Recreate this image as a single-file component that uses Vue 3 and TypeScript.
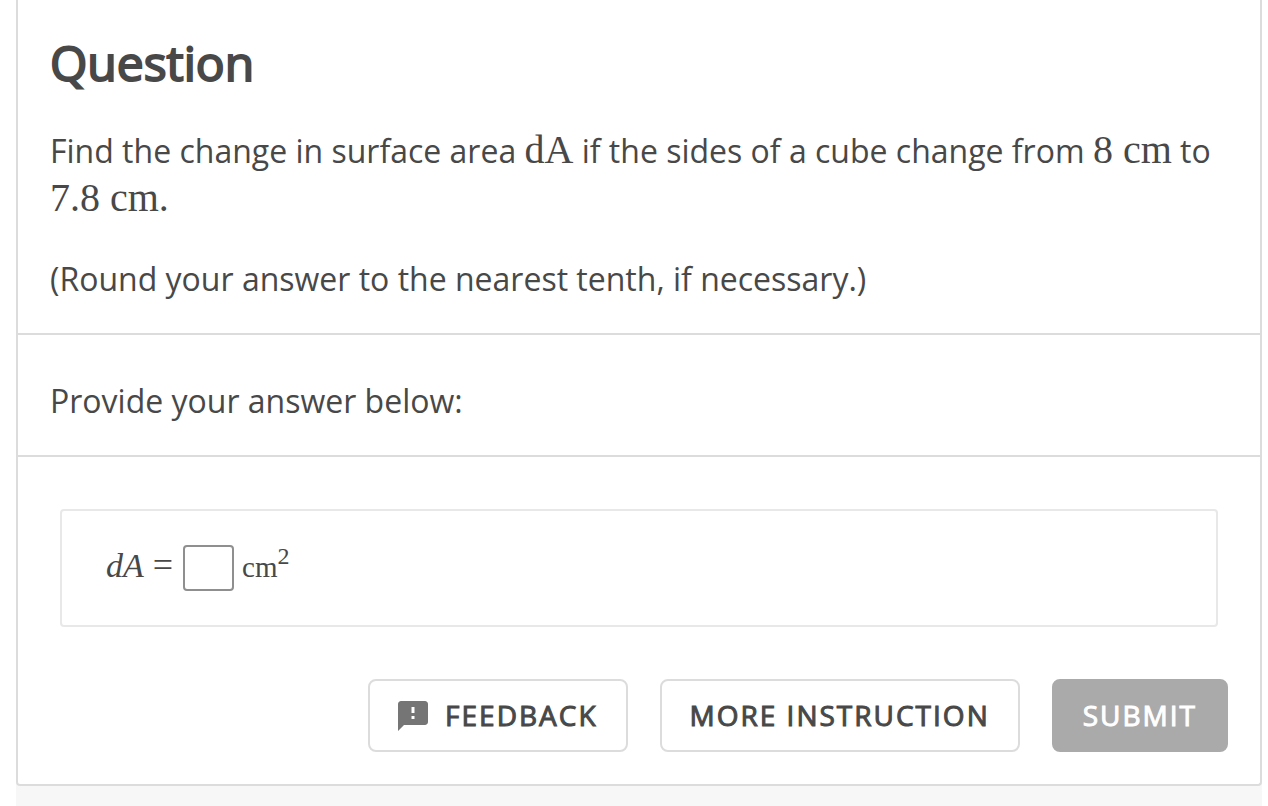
<script setup lang="ts">
import { ref } from 'vue'

const answer = ref('')
</script>

<template>
  <main class="page">
    <article class="card">
      <section class="question">
        <h1>Question</h1>
        <p>
          Find the change in surface area <span class="math">dA</span> if the sides of a cube change from
          <span class="math">8&nbsp;cm</span> to <span class="math">7.8&nbsp;cm.</span>
        </p>
        <p>(Round your answer to the nearest tenth, if necessary.)</p>
      </section>

      <section class="prompt">
        <p>Provide your answer below:</p>
      </section>

      <form class="response" @submit.prevent>
        <div class="answer">
          <label for="answer"><i>dA</i><span class="equals">=</span></label>
          <input id="answer" v-model="answer" type="text" autocomplete="off" />
          <span class="unit">cm<sup>2</sup></span>
        </div>
        <div class="actions">
          <button type="button" class="button">
            <svg class="icon" viewBox="2 2 20 20" aria-hidden="true">
              <path d="M20 2H4c-1.100 0-1.990.9-1.990 2L2 22l4-4h14c1.100 0 2-.9 2-2V4c0-1.100-.9-2-2-2zm-7 12h-2v-2h2v2zm0-4h-2V6h2v4z" />
            </svg>
            FEEDBACK
          </button>
          <button type="button" class="button">MORE INSTRUCTION</button>
          <button type="submit" class="button submit" disabled>SUBMIT</button>
        </div>
      </form>
    </article>
  </main>
</template>

<style>
body {
  margin: 0;
  background: #fff;
}
</style>

<style scoped>
.page {
  margin: 0 6px 0 16px;
  padding-bottom: 20px;
  background: #f7f7f7;
  color: #484848;
  font-family: "Open Sans", "Noto Sans", sans-serif;
  font-size: 32px;
  line-height: 48px;
}

.card {
  border: 2px solid #dcdcdc;
  border-top: 0;
  border-radius: 0 0 4px 4px;
  background: #fff;
}

.question {
  padding: 31px 32px 30px;
}

h1 {
  margin: 0 0 32px;
  font-size: 48px;
  font-weight: 400;
  line-height: 64px;
  -webkit-text-stroke: 2px currentColor;
}

p {
  margin: 0;
}

.question p + p {
  margin-top: 32px;
}

.math {
  font-family: "Liberation Serif", serif;
  font-size: 40px;
  line-height: 1;
}

.prompt {
  padding: 42px 32px 30px;
  border: solid #dcdcdc;
  border-width: 2px 0;
}

.response {
  padding: 52px 32px 32px;
}

.answer {
  display: flex;
  align-items: baseline;
  margin: 0 10px 52px;
  padding: 34px 44px;
  border: 2px solid #e8e8e8;
  border-radius: 4px;
  font-family: "Liberation Serif", serif;
  line-height: 40px;
}

.answer label {
  font-size: 34px;
}

.equals {
  margin: 0 10px 0 9px;
  font-size: 36px;
}

.answer input {
  box-sizing: border-box;
  align-self: center;
  width: 51px;
  height: 46px;
  padding: 4px;
  border: 2px solid #8f8f8f;
  border-radius: 4px;
  background: #fff;
  color: inherit;
  font: inherit;
  line-height: 1;
}

.unit {
  margin-left: 8px;
  font-size: 29px;
}

.unit sup {
  font-size: 24px;
  line-height: 0;
  vertical-align: 13px;
}

.actions {
  display: flex;
  flex-wrap: wrap;
  justify-content: flex-end;
  gap: 32px;
}

.button {
  display: flex;
  align-items: center;
  gap: 17px;
  padding: 14px 28px;
  border: 2px solid #dcdcdc;
  border-radius: 8px;
  background: #fff;
  color: #484848;
  font-family: inherit;
  font-size: 28px;
  font-weight: 400;
  letter-spacing: 2px;
  line-height: 41px;
  -webkit-text-stroke: 1px currentColor;
}

.submit {
  padding: 14px 29px;
  border-color: #aaa;
  background: #aaa;
  color: #fff;
}

.icon {
  width: 30px;
  height: 30px;
  fill: #757575;
  stroke: none;
}
</style>
